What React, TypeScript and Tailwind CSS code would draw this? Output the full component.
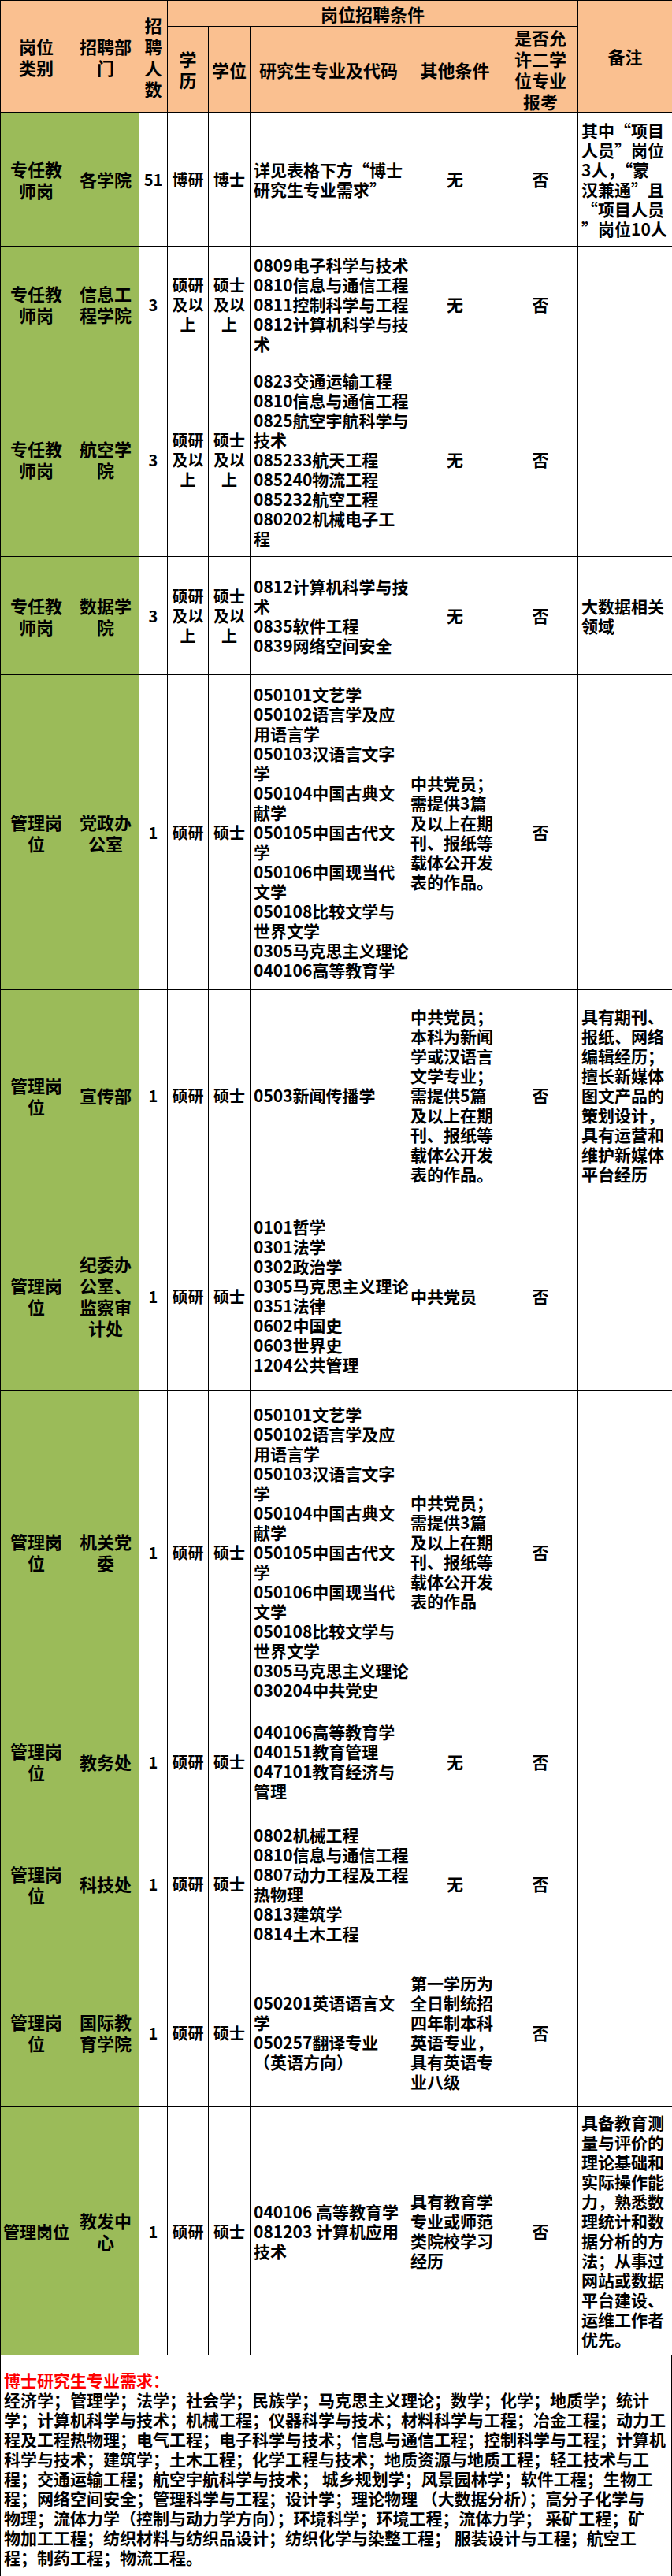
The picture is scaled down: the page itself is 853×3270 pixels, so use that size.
import React from "react";

type Row = {
  h: string;
  c1: string[];
  c1Small?: boolean;
  c2: string[];
  n: string;
  edu: string[];
  deg: string[];
  major: string[];
  other: string[];
  otherCenter?: boolean;
  allow: string;
  note: string[];
};

const literature = [
  "050101文艺学",
  "050102语言学及应",
  "用语言学",
  "050103汉语言文字",
  "学",
  "050104中国古典文",
  "献学",
  "050105中国古代文",
  "学",
  "050106中国现当代",
  "文学",
  "050108比较文学与",
  "世界文学",
  "0305马克思主义理论",
];

const rows: Row[] = [
  {
    h: "h-[170px]",
    c1: ["专任教", "师岗"],
    c2: ["各学院"],
    n: "51",
    edu: ["博研"],
    deg: ["博士"],
    major: ["详见表格下方“博士", "研究生专业需求”"],
    other: ["无"],
    otherCenter: true,
    allow: "否",
    note: ["其中“项目", "人员”岗位", "3人，“蒙", "汉兼通”且", "“项目人员", "”岗位10人"],
  },
  {
    h: "h-[147px]",
    c1: ["专任教", "师岗"],
    c2: ["信息工", "程学院"],
    n: "3",
    edu: ["硕研", "及以", "上"],
    deg: ["硕士", "及以", "上"],
    major: ["0809电子科学与技术", "0810信息与通信工程", "0811控制科学与工程", "0812计算机科学与技", "术"],
    other: ["无"],
    otherCenter: true,
    allow: "否",
    note: [],
  },
  {
    h: "h-[247px]",
    c1: ["专任教", "师岗"],
    c2: ["航空学", "院"],
    n: "3",
    edu: ["硕研", "及以", "上"],
    deg: ["硕士", "及以", "上"],
    major: [
      "0823交通运输工程",
      "0810信息与通信工程",
      "0825航空宇航科学与",
      "技术",
      "085233航天工程",
      "085240物流工程",
      "085232航空工程",
      "080202机械电子工",
      "程",
    ],
    other: ["无"],
    otherCenter: true,
    allow: "否",
    note: [],
  },
  {
    h: "h-[150px]",
    c1: ["专任教", "师岗"],
    c2: ["数据学", "院"],
    n: "3",
    edu: ["硕研", "及以", "上"],
    deg: ["硕士", "及以", "上"],
    major: ["0812计算机科学与技", "术", "0835软件工程", "0839网络空间安全"],
    other: ["无"],
    otherCenter: true,
    allow: "否",
    note: ["大数据相关", "领域"],
  },
  {
    h: "h-[400px]",
    c1: ["管理岗", "位"],
    c2: ["党政办", "公室"],
    n: "1",
    edu: ["硕研"],
    deg: ["硕士"],
    major: [...literature, "040106高等教育学"],
    other: ["中共党员；", "需提供3篇", "及以上在期", "刊、报纸等", "载体公开发", "表的作品。"],
    allow: "否",
    note: [],
  },
  {
    h: "h-[268px]",
    c1: ["管理岗", "位"],
    c2: ["宣传部"],
    n: "1",
    edu: ["硕研"],
    deg: ["硕士"],
    major: ["0503新闻传播学"],
    other: [
      "中共党员；",
      "本科为新闻",
      "学或汉语言",
      "文学专业；",
      "需提供5篇",
      "及以上在期",
      "刊、报纸等",
      "载体公开发",
      "表的作品。",
    ],
    allow: "否",
    note: [
      "具有期刊、",
      "报纸、网络",
      "编辑经历；",
      "擅长新媒体",
      "图文产品的",
      "策划设计，",
      "具有运营和",
      "维护新媒体",
      "平台经历",
    ],
  },
  {
    h: "h-[241px]",
    c1: ["管理岗", "位"],
    c2: ["纪委办", "公室、", "监察审", "计处"],
    n: "1",
    edu: ["硕研"],
    deg: ["硕士"],
    major: ["0101哲学", "0301法学", "0302政治学", "0305马克思主义理论", "0351法律", "0602中国史", "0603世界史", "1204公共管理"],
    other: ["中共党员"],
    allow: "否",
    note: [],
  },
  {
    h: "h-[409px]",
    c1: ["管理岗", "位"],
    c2: ["机关党", "委"],
    n: "1",
    edu: ["硕研"],
    deg: ["硕士"],
    major: [...literature, "030204中共党史"],
    other: ["中共党员；", "需提供3篇", "及以上在期", "刊、报纸等", "载体公开发", "表的作品"],
    allow: "否",
    note: [],
  },
  {
    h: "h-[123px]",
    c1: ["管理岗", "位"],
    c2: ["教务处"],
    n: "1",
    edu: ["硕研"],
    deg: ["硕士"],
    major: ["040106高等教育学", "040151教育管理", "047101教育经济与", "管理"],
    other: ["无"],
    otherCenter: true,
    allow: "否",
    note: [],
  },
  {
    h: "h-[188px]",
    c1: ["管理岗", "位"],
    c2: ["科技处"],
    n: "1",
    edu: ["硕研"],
    deg: ["硕士"],
    major: ["0802机械工程", "0810信息与通信工程", "0807动力工程及工程", "热物理", "0813建筑学", "0814土木工程"],
    other: ["无"],
    otherCenter: true,
    allow: "否",
    note: [],
  },
  {
    h: "h-[189px]",
    c1: ["管理岗", "位"],
    c2: ["国际教", "育学院"],
    n: "1",
    edu: ["硕研"],
    deg: ["硕士"],
    major: ["050201英语语言文", "学", "050257翻译专业", "（英语方向）"],
    other: ["第一学历为", "全日制统招", "四年制本科", "英语专业，", "具有英语专", "业八级"],
    allow: "否",
    note: [],
  },
  {
    h: "h-[315px]",
    c1: ["管理岗位"],
    c1Small: true,
    c2: ["教发中", "心"],
    n: "1",
    edu: ["硕研"],
    deg: ["硕士"],
    major: ["040106 高等教育学", "081203 计算机应用", "技术"],
    other: ["具有教育学", "专业或师范", "类院校学习", "经历"],
    allow: "否",
    note: [
      "具备教育测",
      "量与评价的",
      "理论基础和",
      "实际操作能",
      "力，熟悉数",
      "理统计和数",
      "据分析的方",
      "法；从事过",
      "网站或数据",
      "平台建设、",
      "运维工作者",
      "优先。",
    ],
  },
];

const footerLines = [
  "经济学；管理学；法学；社会学；民族学；马克思主义理论；数学；化学；地质学；统计",
  "学；计算机科学与技术；机械工程；仪器科学与技术；材料科学与工程；冶金工程；动力工",
  "程及工程热物理；电气工程；电子科学与技术；信息与通信工程；控制科学与工程；计算机",
  "科学与技术；建筑学；土木工程；化学工程与技术；地质资源与地质工程；轻工技术与工",
  "程；交通运输工程；航空宇航科学与技术； 城乡规划学；风景园林学；软件工程；生物工",
  "程；网络空间安全；管理科学与工程；设计学；理论物理 （大数据分析）；高分子化学与",
  "物理；流体力学（控制与动力学方向）；环境科学；环境工程；流体力学； 采矿工程；矿",
  "物加工工程；纺织材料与纺织品设计；纺织化学与染整工程； 服装设计与工程；航空工",
  "程；制药工程；物流工程。",
];

const Lines = ({ lines }: { lines: string[] }) => (
  <>
    {lines.map((l, i) => (
      <div key={i} className="whitespace-nowrap">
        {l}
      </div>
    ))}
  </>
);

const th = "border border-black bg-[#FAC090] p-0 text-center align-middle font-bold text-[22px] leading-[27px]";
const td = "border border-black p-0 align-middle";

export default function App() {
  return (
    <div className="w-[853px] bg-white font-['Noto_Sans_CJK_SC',sans-serif] font-bold text-black">
      <table className="w-[853px] table-fixed border-collapse">
        <colgroup>
          <col className="w-[91px]" />
          <col className="w-[85px]" />
          <col className="w-[36px]" />
          <col className="w-[52px]" />
          <col className="w-[53px]" />
          <col className="w-[199px]" />
          <col className="w-[122px]" />
          <col className="w-[95px]" />
          <col className="w-[120px]" />
        </colgroup>
        <thead>
          <tr className="h-[33px]">
            <th rowSpan={2} className={th}>
              <Lines lines={["岗位", "类别"]} />
            </th>
            <th rowSpan={2} className={th}>
              <Lines lines={["招聘部", "门"]} />
            </th>
            <th rowSpan={2} className={th}>
              <Lines lines={["招", "聘", "人", "数"]} />
            </th>
            <th colSpan={5} className={th}>
              岗位招聘条件
            </th>
            <th rowSpan={2} className={th}>
              备注
            </th>
          </tr>
          <tr className="h-[106px]">
            <th className={th}>
              <Lines lines={["学", "历"]} />
            </th>
            <th className={th}>学位</th>
            <th className={`${th} whitespace-nowrap`}>研究生专业及代码</th>
            <th className={th}>其他条件</th>
            <th className={`${th} leading-[26px]`}>
              <Lines lines={["是否允", "许二学", "位专业", "报考"]} />
            </th>
          </tr>
        </thead>
        <tbody>
          {rows.map((r, i) => (
            <tr key={i} className={r.h}>
              <td
                className={`${td} bg-[#9BBB59] text-center ${
                  r.c1Small ? "text-[21px] leading-[25px]" : "text-[22px] leading-[27px]"
                }`}
              >
                <Lines lines={r.c1} />
              </td>
              <td className={`${td} bg-[#9BBB59] text-center text-[22px] leading-[27px]`}>
                <Lines lines={r.c2} />
              </td>
              <td className={`${td} text-center text-[20px] leading-[25px]`}>{r.n}</td>
              <td className={`${td} text-center text-[20px] leading-[25px]`}>
                <Lines lines={r.edu} />
              </td>
              <td className={`${td} text-center text-[20px] leading-[25px]`}>
                <Lines lines={r.deg} />
              </td>
              <td className={`${td} px-[4px] text-left text-[21px] leading-[25px]`}>
                <Lines lines={r.major} />
              </td>
              <td
                className={`${td} px-[4px] text-[21px] leading-[25px] ${
                  r.otherCenter ? "text-center" : "text-left"
                }`}
              >
                <Lines lines={r.other} />
              </td>
              <td className={`${td} text-center text-[21px] leading-[25px]`}>{r.allow}</td>
              <td className={`${td} px-[4px] text-left text-[21px] leading-[25px]`}>
                <Lines lines={r.note} />
              </td>
            </tr>
          ))}
        </tbody>
      </table>
      <div className="h-[284px] w-[853px] border border-t-0 border-black px-[4px] pt-[19px] text-[21px] leading-[25px]">
        <div className="text-[#FF0000]">博士研究生专业需求：</div>
        <Lines lines={footerLines} />
      </div>
    </div>
  );
}
